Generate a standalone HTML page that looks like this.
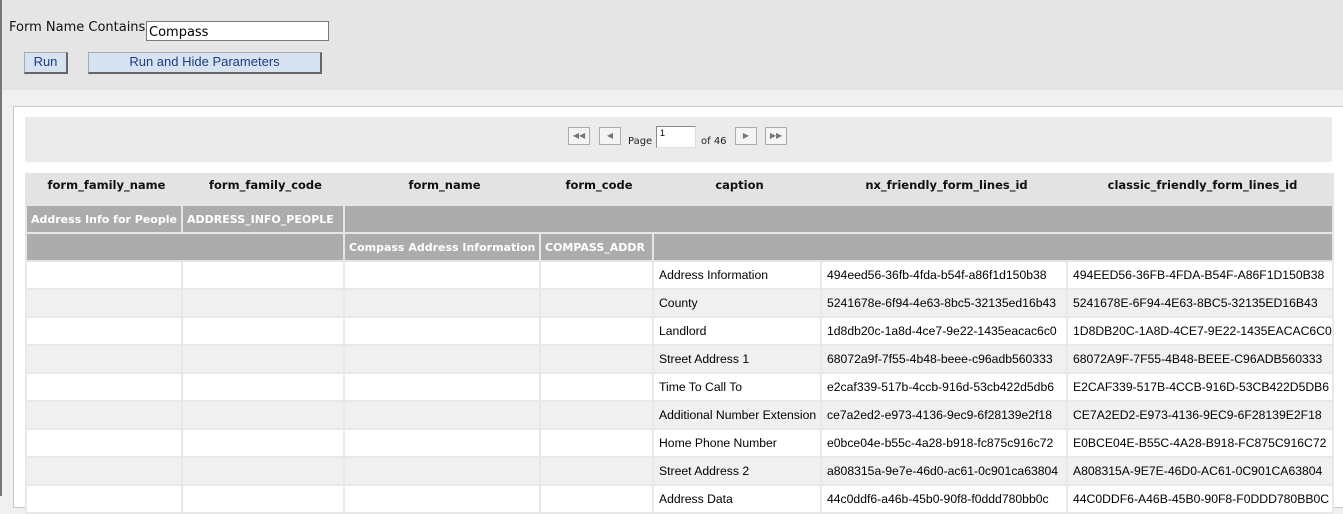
<!DOCTYPE html>
<html><head><style>
body{margin:0;width:1343px;height:496px;overflow:hidden;background:#f0f0f0;font-family:"Liberation Sans",Tahoma,sans-serif;position:relative}
.lb{position:absolute;left:0;top:0;width:2px;height:496px;background:#777;z-index:5}
.top{position:absolute;left:0;top:0;width:1343px;height:90px;background:#e5e5e5}
.lbl{position:absolute;left:9px;top:20px;font-family:"DejaVu Sans",sans-serif;font-size:13px;color:#111}
.inp{position:absolute;left:146px;top:21px;width:183px;height:20px;box-sizing:border-box;border:1px solid #7a7a7a;background:#fff;font-size:13px;padding:3px 2px;font-family:"DejaVu Sans",sans-serif}
.btn{position:absolute;top:52px;height:22px;box-sizing:border-box;background:#d6e2f0;border:1px solid #aaa;border-right:2px solid #666;border-bottom:2px solid #666;color:#1e3f7a;font-size:13px;text-align:center;line-height:18px}
.box{position:absolute;left:13px;top:106px;width:1335px;height:400px;background:#fff;border:1px solid #c8c8c8}
.pager{position:absolute;left:25px;top:117px;width:1307px;height:45px;background:#ebebeb}
.pb{position:absolute;top:10px;width:22px;height:18px;box-sizing:border-box;border:1px solid #aaa;background:#f4f4f4;font-size:8px;color:#777;text-align:center;line-height:16px}
.pt{position:absolute;top:19px;font-size:10px;font-family:"DejaVu Sans",sans-serif;color:#222}
.pi{position:absolute;left:631px;top:9px;width:40px;height:22px;box-sizing:border-box;border:1px solid #888;border-bottom-color:#ddd;border-right-color:#ddd;background:#fff;font-size:9px;padding:1px 3px}
table{position:absolute;left:25px;top:173px;border-collapse:collapse;table-layout:fixed;width:1307px;font-size:12.2px}
td{border:2px solid #e8e8e8;white-space:nowrap;overflow:hidden;padding:0 0 0 5px;height:26px}
tr.h td{background:#e3e3e3;font-weight:bold;text-align:center;height:26px;border-color:#e3e3e3;border-bottom:0;vertical-align:top;padding-top:3px;font-family:"DejaVu Sans",sans-serif;font-size:11.5px;color:#111}
tr.g td{background:#acacac;color:#fff;font-weight:bold;border-color:#e6e6e6;font-family:"DejaVu Sans",sans-serif;font-size:11px;padding-left:4px;height:26px}
tr.a td{background:#fff}
tr.b td{background:#f0f0f0}
</style></head><body>
<div class="lb"></div>
<div class="top">
<div class="lbl">Form Name Contains</div>
<div class="inp">Compass</div>
<div class="btn" style="left:24px;width:44px">Run</div>
<div class="btn" style="left:88px;width:234px">Run and Hide Parameters</div>
</div>
<div class="box"></div>
<div class="pager">
<div class="pb" style="left:543px">◀◀</div>
<div class="pb" style="left:574px">◀</div>
<div class="pt" style="left:603px">Page</div>
<div class="pi">1</div>
<div class="pt" style="left:676px">of 46</div>
<div class="pb" style="left:710px">▶</div>
<div class="pb" style="left:740px">▶▶</div>
</div>
<table>
<col style="width:156px"><col style="width:162px"><col style="width:196px"><col style="width:113px"><col style="width:168px"><col style="width:246px"><col style="width:266px">
<tr class="h"><td>form_family_name</td><td>form_family_code</td><td>form_name</td><td>form_code</td><td>caption</td><td>nx_friendly_form_lines_id</td><td>classic_friendly_form_lines_id</td></tr>
<tr class="g"><td>Address Info for People</td><td>ADDRESS_INFO_PEOPLE</td><td colspan="5"></td></tr>
<tr class="g"><td colspan="2"></td><td>Compass Address Information</td><td>COMPASS_ADDR</td><td colspan="3"></td></tr>
<tr class="a"><td></td><td></td><td></td><td></td><td>Address Information</td><td>494eed56-36fb-4fda-b54f-a86f1d150b38</td><td>494EED56-36FB-4FDA-B54F-A86F1D150B38</td></tr>
<tr class="b"><td></td><td></td><td></td><td></td><td>County</td><td>5241678e-6f94-4e63-8bc5-32135ed16b43</td><td>5241678E-6F94-4E63-8BC5-32135ED16B43</td></tr>
<tr class="a"><td></td><td></td><td></td><td></td><td>Landlord</td><td>1d8db20c-1a8d-4ce7-9e22-1435eacac6c0</td><td>1D8DB20C-1A8D-4CE7-9E22-1435EACAC6C0</td></tr>
<tr class="b"><td></td><td></td><td></td><td></td><td>Street Address 1</td><td>68072a9f-7f55-4b48-beee-c96adb560333</td><td>68072A9F-7F55-4B48-BEEE-C96ADB560333</td></tr>
<tr class="a"><td></td><td></td><td></td><td></td><td>Time To Call To</td><td>e2caf339-517b-4ccb-916d-53cb422d5db6</td><td>E2CAF339-517B-4CCB-916D-53CB422D5DB6</td></tr>
<tr class="b"><td></td><td></td><td></td><td></td><td>Additional Number Extension</td><td>ce7a2ed2-e973-4136-9ec9-6f28139e2f18</td><td>CE7A2ED2-E973-4136-9EC9-6F28139E2F18</td></tr>
<tr class="a"><td></td><td></td><td></td><td></td><td>Home Phone Number</td><td>e0bce04e-b55c-4a28-b918-fc875c916c72</td><td>E0BCE04E-B55C-4A28-B918-FC875C916C72</td></tr>
<tr class="b"><td></td><td></td><td></td><td></td><td>Street Address 2</td><td>a808315a-9e7e-46d0-ac61-0c901ca63804</td><td>A808315A-9E7E-46D0-AC61-0C901CA63804</td></tr>
<tr class="a"><td></td><td></td><td></td><td></td><td>Address Data</td><td>44c0ddf6-a46b-45b0-90f8-f0ddd780bb0c</td><td>44C0DDF6-A46B-45B0-90F8-F0DDD780BB0C</td></tr>
</table>
</body></html>
